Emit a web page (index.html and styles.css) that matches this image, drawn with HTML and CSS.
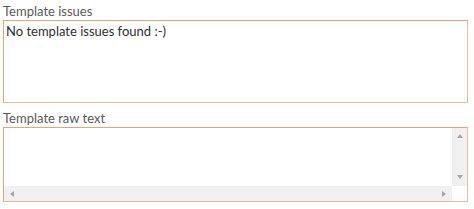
FILE: index.html
```html
<!DOCTYPE html>
<html lang="en">
<head>
    <meta charset="UTF-8">
    <title>Template</title>
    <link rel="stylesheet" href="styles.css">
</head>
<body>
    <div class="field">
        <label class="field-label" for="issues">Template issues</label>
        <div id="issues" class="text-box issues-box">No template issues found :-)</div>
    </div>
    <div class="field">
        <label class="field-label" for="raw">Template raw text</label>
        <div class="text-box raw-box">
            <textarea id="raw" class="raw-input" wrap="off"></textarea>
            <div class="vscroll">
                <span class="arrow arrow-up"></span>
                <span class="arrow arrow-down"></span>
            </div>
            <div class="hscroll">
                <span class="arrow arrow-left"></span>
                <span class="arrow arrow-right"></span>
            </div>
            <div class="corner"></div>
        </div>
    </div>
</body>
</html>
```

FILE: styles.css
```css
body {
    margin: 0;
    padding: 3px 6px 0 3px;
    font-family: Lato, "Open Sans", sans-serif;
    font-size: 13px;
    color: #333;
    background: #fff;
}
.field {
    margin-bottom: 7px;
}
.field-label {
    display: block;
    height: 17px;
    line-height: 17px;
    color: #595959;
}
.text-box {
    border: 1px solid #eda274;
    border-right-color: #f0b898;
    border-bottom-color: #f0b898;
    background: #fff;
    box-sizing: border-box;
}
.issues-box {
    height: 83px;
    padding: 2px 2px;
    line-height: 17px;
    color: #303030;
}
.raw-box {
    height: 75px;
    display: grid;
    grid-template-columns: 1fr 15px;
    grid-template-rows: 1fr 15px;
}
.raw-input {
    border: none;
    outline: none;
    resize: none;
    overflow: hidden;
    margin: 0;
    padding: 2px;
    font: inherit;
}
.vscroll {
    background: #f0f0f0;
    display: flex;
    flex-direction: column;
    justify-content: space-between;
    align-items: center;
    padding: 6px 0 7px;
}
.hscroll {
    background: #f0f0f0;
    display: flex;
    justify-content: space-between;
    align-items: center;
    padding: 0 6px 0 6px;
}
.corner {
    background: #fff;
}
.arrow {
    width: 0;
    height: 0;
    border: 3px solid transparent;
}
.arrow-up {
    border-bottom: 4px solid #a6a6a6;
    border-top: none;
}
.arrow-down {
    border-top: 4px solid #a6a6a6;
    border-bottom: none;
}
.arrow-left {
    border-right: 4px solid #a6a6a6;
    border-left: none;
}
.arrow-right {
    border-left: 4px solid #a6a6a6;
    border-right: none;
}
```
